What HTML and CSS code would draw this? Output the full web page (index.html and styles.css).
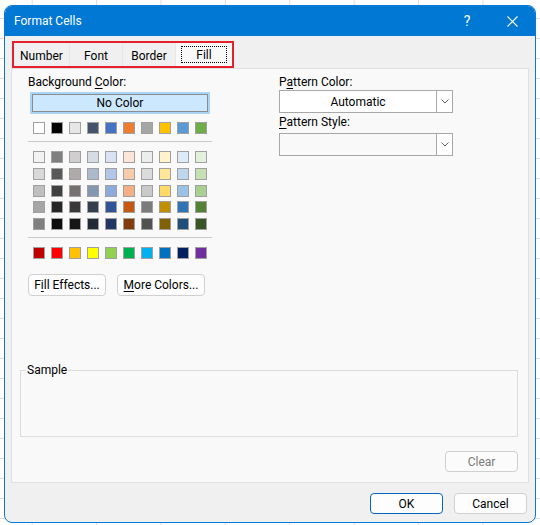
FILE: index.html
```html
<!DOCTYPE html>
<html lang="en">
<head>
<meta charset="utf-8">
<title>Format Cells</title>
<link rel="stylesheet" href="styles.css">
</head>
<body>
<div class="window">
  <div class="titlebar">
    <span class="title">Format Cells</span>
    <div class="caption-btns">
      <span class="cap-btn help">?</span>
      <span class="cap-btn close"><svg width="11" height="11" viewBox="0 0 11 11"><path d="M0.5 0.5 L10.5 10.5 M10.5 0.5 L0.5 10.5" stroke="#fff" stroke-width="1.1" fill="none"/></svg></span>
    </div>
  </div>

  <div class="tabs">
    <div class="tab t-number">Number</div>
    <div class="tab t-font">Font</div>
    <div class="tab t-border">Border</div>
    <div class="tab t-fill active"><span class="focus">Fill</span></div>
  </div>

  <div class="panel">
    <div class="cols">
      <div class="col-left">
        <div class="label">Background <span class="ak">C</span>olor:</div>
        <div class="nocolor">No Color</div>
        <div class="swatches">
          <span class="sw" style="background:#FFFFFF"></span><span class="sw" style="background:#000000"></span><span class="sw" style="background:#E7E6E6"></span><span class="sw" style="background:#44546A"></span><span class="sw" style="background:#4472C4"></span><span class="sw" style="background:#ED7D31"></span><span class="sw" style="background:#A5A5A5"></span><span class="sw" style="background:#FFC000"></span><span class="sw" style="background:#5B9BD5"></span><span class="sw" style="background:#70AD47"></span>
        </div>
        <div class="sep sep-1"></div>
        <div class="swatches shades">
          <span class="sw" style="background:#F2F2F2"></span><span class="sw" style="background:#7F7F7F"></span><span class="sw" style="background:#D0CECE"></span><span class="sw" style="background:#D6DCE4"></span><span class="sw" style="background:#D9E1F2"></span><span class="sw" style="background:#FCE4D6"></span><span class="sw" style="background:#EDEDED"></span><span class="sw" style="background:#FFF2CC"></span><span class="sw" style="background:#DDEBF7"></span><span class="sw" style="background:#E2EFDA"></span>
          <span class="sw" style="background:#D9D9D9"></span><span class="sw" style="background:#595959"></span><span class="sw" style="background:#AEAAAA"></span><span class="sw" style="background:#ACB9CA"></span><span class="sw" style="background:#B4C6E7"></span><span class="sw" style="background:#F8CBAD"></span><span class="sw" style="background:#DBDBDB"></span><span class="sw" style="background:#FFE699"></span><span class="sw" style="background:#BDD7EE"></span><span class="sw" style="background:#C6E0B4"></span>
          <span class="sw" style="background:#BFBFBF"></span><span class="sw" style="background:#404040"></span><span class="sw" style="background:#757171"></span><span class="sw" style="background:#8497B0"></span><span class="sw" style="background:#8EA9DB"></span><span class="sw" style="background:#F4B084"></span><span class="sw" style="background:#C9C9C9"></span><span class="sw" style="background:#FFD966"></span><span class="sw" style="background:#9BC2E6"></span><span class="sw" style="background:#A9D08E"></span>
          <span class="sw" style="background:#A6A6A6"></span><span class="sw" style="background:#262626"></span><span class="sw" style="background:#3A3838"></span><span class="sw" style="background:#333F4F"></span><span class="sw" style="background:#305496"></span><span class="sw" style="background:#C65911"></span><span class="sw" style="background:#7B7B7B"></span><span class="sw" style="background:#BF8F00"></span><span class="sw" style="background:#2F75B5"></span><span class="sw" style="background:#548235"></span>
          <span class="sw" style="background:#808080"></span><span class="sw" style="background:#0D0D0D"></span><span class="sw" style="background:#161616"></span><span class="sw" style="background:#222B35"></span><span class="sw" style="background:#203764"></span><span class="sw" style="background:#833C0C"></span><span class="sw" style="background:#525252"></span><span class="sw" style="background:#806000"></span><span class="sw" style="background:#1F4E78"></span><span class="sw" style="background:#375623"></span>
        </div>
        <div class="sep sep-2"></div>
        <div class="swatches">
          <span class="sw" style="background:#C00000"></span><span class="sw" style="background:#FF0000"></span><span class="sw" style="background:#FFC000"></span><span class="sw" style="background:#FFFF00"></span><span class="sw" style="background:#92D050"></span><span class="sw" style="background:#00B050"></span><span class="sw" style="background:#00B0F0"></span><span class="sw" style="background:#0070C0"></span><span class="sw" style="background:#002060"></span><span class="sw" style="background:#7030A0"></span>
        </div>
        <div class="btn-row">
          <button class="btn btn-fill">F<span class="ak">i</span>ll Effects...</button>
          <button class="btn btn-more"><span class="ak">M</span>ore Colors...</button>
        </div>
      </div>

      <div class="col-right">
        <div class="label">P<span class="ak">a</span>ttern Color:</div>
        <div class="select">
          <span class="value">Automatic</span>
          <span class="arrow"><svg width="8" height="5" viewBox="0 0 8 5"><path d="M0.5 0.5 L4 4 L7.5 0.5" stroke="#606060" stroke-width="1" fill="none"/></svg></span>
        </div>
        <div class="label label-style"><span class="ak">P</span>attern Style:</div>
        <div class="select select-empty">
          <span class="value"></span>
          <span class="arrow"><svg width="8" height="5" viewBox="0 0 8 5"><path d="M0.5 0.5 L4 4 L7.5 0.5" stroke="#606060" stroke-width="1" fill="none"/></svg></span>
        </div>
      </div>
    </div>

    <fieldset class="sample">
      <legend>Sample</legend>
      <div class="sample-area"></div>
    </fieldset>

    <div class="clear-row">
      <button class="btn btn-clear">Clear</button>
    </div>
  </div>

  <div class="footer">
    <button class="btn btn-ok">OK</button>
    <button class="btn btn-cancel">Cancel</button>
  </div>
</div>
</body>
</html>
```

FILE: styles.css
```css
* {
  box-sizing: border-box;
}

html, body {
  margin: 0;
  padding: 0;
}

body {
  width: 540px;
  height: 525px;
  overflow: hidden;
  background-color: #ffffff;
  background-image:
    linear-gradient(to right, #dcdcdc 1px, transparent 1px),
    linear-gradient(to bottom, #dcdcdc 1px, transparent 1px);
  background-size: 64.4px 20px;
  background-position: 31.7px 18px;
  font-family: Roboto, "Noto Sans", sans-serif;
  font-size: 12px;
  color: #000;
}

.window {
  margin: 5px 0 0 4px;
  width: 532px;
  height: 518px;
  border: 1px solid #0a78d4;
  border-radius: 8px;
  overflow: hidden;
  background: #f0f0f0;
  display: flex;
  flex-direction: column;
}

/* Title bar */
.titlebar {
  height: 30px;
  flex: none;
  background: #0078d4;
  display: flex;
  align-items: center;
  color: #fff;
}

.title {
  padding-left: 9px;
  font-size: 12px;
  flex: 1;
}

.caption-btns {
  display: flex;
  height: 100%;
}

.cap-btn {
  width: 46px;
  height: 100%;
  display: flex;
  align-items: center;
  justify-content: center;
}

.help {
  font-size: 14px;
  padding-left: 2px;
}

/* Tabs */
.tabs {
  flex: none;
  margin: 5px 0 0 7px;
  align-self: flex-start;
  display: flex;
  border: 2px solid #e5202a;
  height: 27px;
}

.tab {
  height: 100%;
  display: flex;
  align-items: center;
  justify-content: center;
  padding-top: 3px;
  border-right: 1px solid #e6e6e6;
  background: #f0f0f0;
}

.t-number { width: 56px; }
.t-font { width: 53px; }
.t-border { width: 53px; }
.t-fill { width: 56px; border-right: none; }

.tab.active {
  background: #f9f9f9;
  padding: 3px 5px 3px;
}

.focus {
  flex: 1;
  align-self: stretch;
  display: flex;
  align-items: center;
  justify-content: center;
  border: 1px dotted #000;
}

/* Panel */
.panel {
  flex: none;
  height: 415px;
  margin: 0 6px;
  background: #f9f9f9;
  border: 1px solid #dfdfdf;
  display: flex;
  flex-direction: column;
}

.cols {
  display: flex;
  padding: 5px 0 0 16px;
}

.col-left {
  width: 251px;
  display: flex;
  flex-direction: column;
  align-items: flex-start;
}

.col-right {
  width: 174px;
  display: flex;
  flex-direction: column;
}

.label {
  height: 16px;
  line-height: 16px;
}

.ak {
  text-decoration: underline;
  text-underline-offset: 2px;
}

.nocolor {
  margin: 4px 0 0 4px;
  width: 176px;
  height: 18px;
  line-height: 16px;
  text-align: center;
  background: #cce8ff;
  border: 1px solid #8c8c8c;
  box-shadow: 0 0 0 2px #a9d5f8;
}

.swatches {
  display: grid;
  grid-template-columns: repeat(10, 12px);
  column-gap: 6px;
  row-gap: 4.75px;
  margin-left: 5px;
  margin-top: 10px;
}

.shades {
  margin-top: 9px;
}

.sw {
  width: 12px;
  height: 12px;
  border: 1px solid #a0a0a0;
}

.sep {
  width: 184px;
  height: 1px;
  background: #c9c9c9;
}

.sep-1 {
  margin-top: 7px;
}

.sep-2 {
  margin-top: 6.5px;
}

.sep-2 + .swatches {
  margin-top: 9px;
}

.btn-row {
  display: flex;
  gap: 11px;
  margin-top: 15.5px;
}

.btn {
  font-family: inherit;
  font-size: 12px;
  color: #000;
  height: 21px;
  padding: 0;
  background: #fdfdfd;
  border: 1px solid #d0d0d0;
  border-radius: 4px;
}

.btn-fill { width: 78px; height: 22px; }
.btn-more { width: 88px; height: 22px; }

.select {
  margin-top: 0;
  height: 23px;
  display: flex;
  border: 1px solid #a8a8a8;
  background: #ffffff;
}

.select .value {
  flex: 1;
  display: flex;
  align-items: center;
  justify-content: center;
}

.select .arrow {
  width: 16px;
  border-left: 1px solid #a8a8a8;
  background: #ffffff;
  display: flex;
  align-items: center;
  justify-content: center;
}

.label-style {
  margin-top: 1px;
}

.select-empty {
  margin-top: 2.5px;
}

.select-empty .value {
  background: #f9f9f9;
}

/* Sample group */
.sample {
  margin: auto 10px 0 8px;
  padding: 0;
  border: 1px solid #dcdcdc;
  min-inline-size: 0;
}

.sample legend {
  margin-left: 5px;
  padding: 0 1px;
  line-height: 14px;
  font-size: 12px;
}

.sample-area {
  height: 59px;
}

.clear-row {
  display: flex;
  justify-content: flex-end;
  margin: 14px 10px 10px 0;
}

.btn-clear {
  width: 73px;
  color: #7a7a7a;
  background: #fbfbfb;
  border-color: #cfcfcf;
}

/* Footer */
.footer {
  flex: 1;
  display: flex;
  justify-content: flex-end;
  align-items: flex-start;
  gap: 11px;
  padding: 10px 8px 0 0;
}

.btn-ok {
  width: 73px;
  border-color: #0067c0;
}

.btn-cancel {
  width: 73px;
}
```
